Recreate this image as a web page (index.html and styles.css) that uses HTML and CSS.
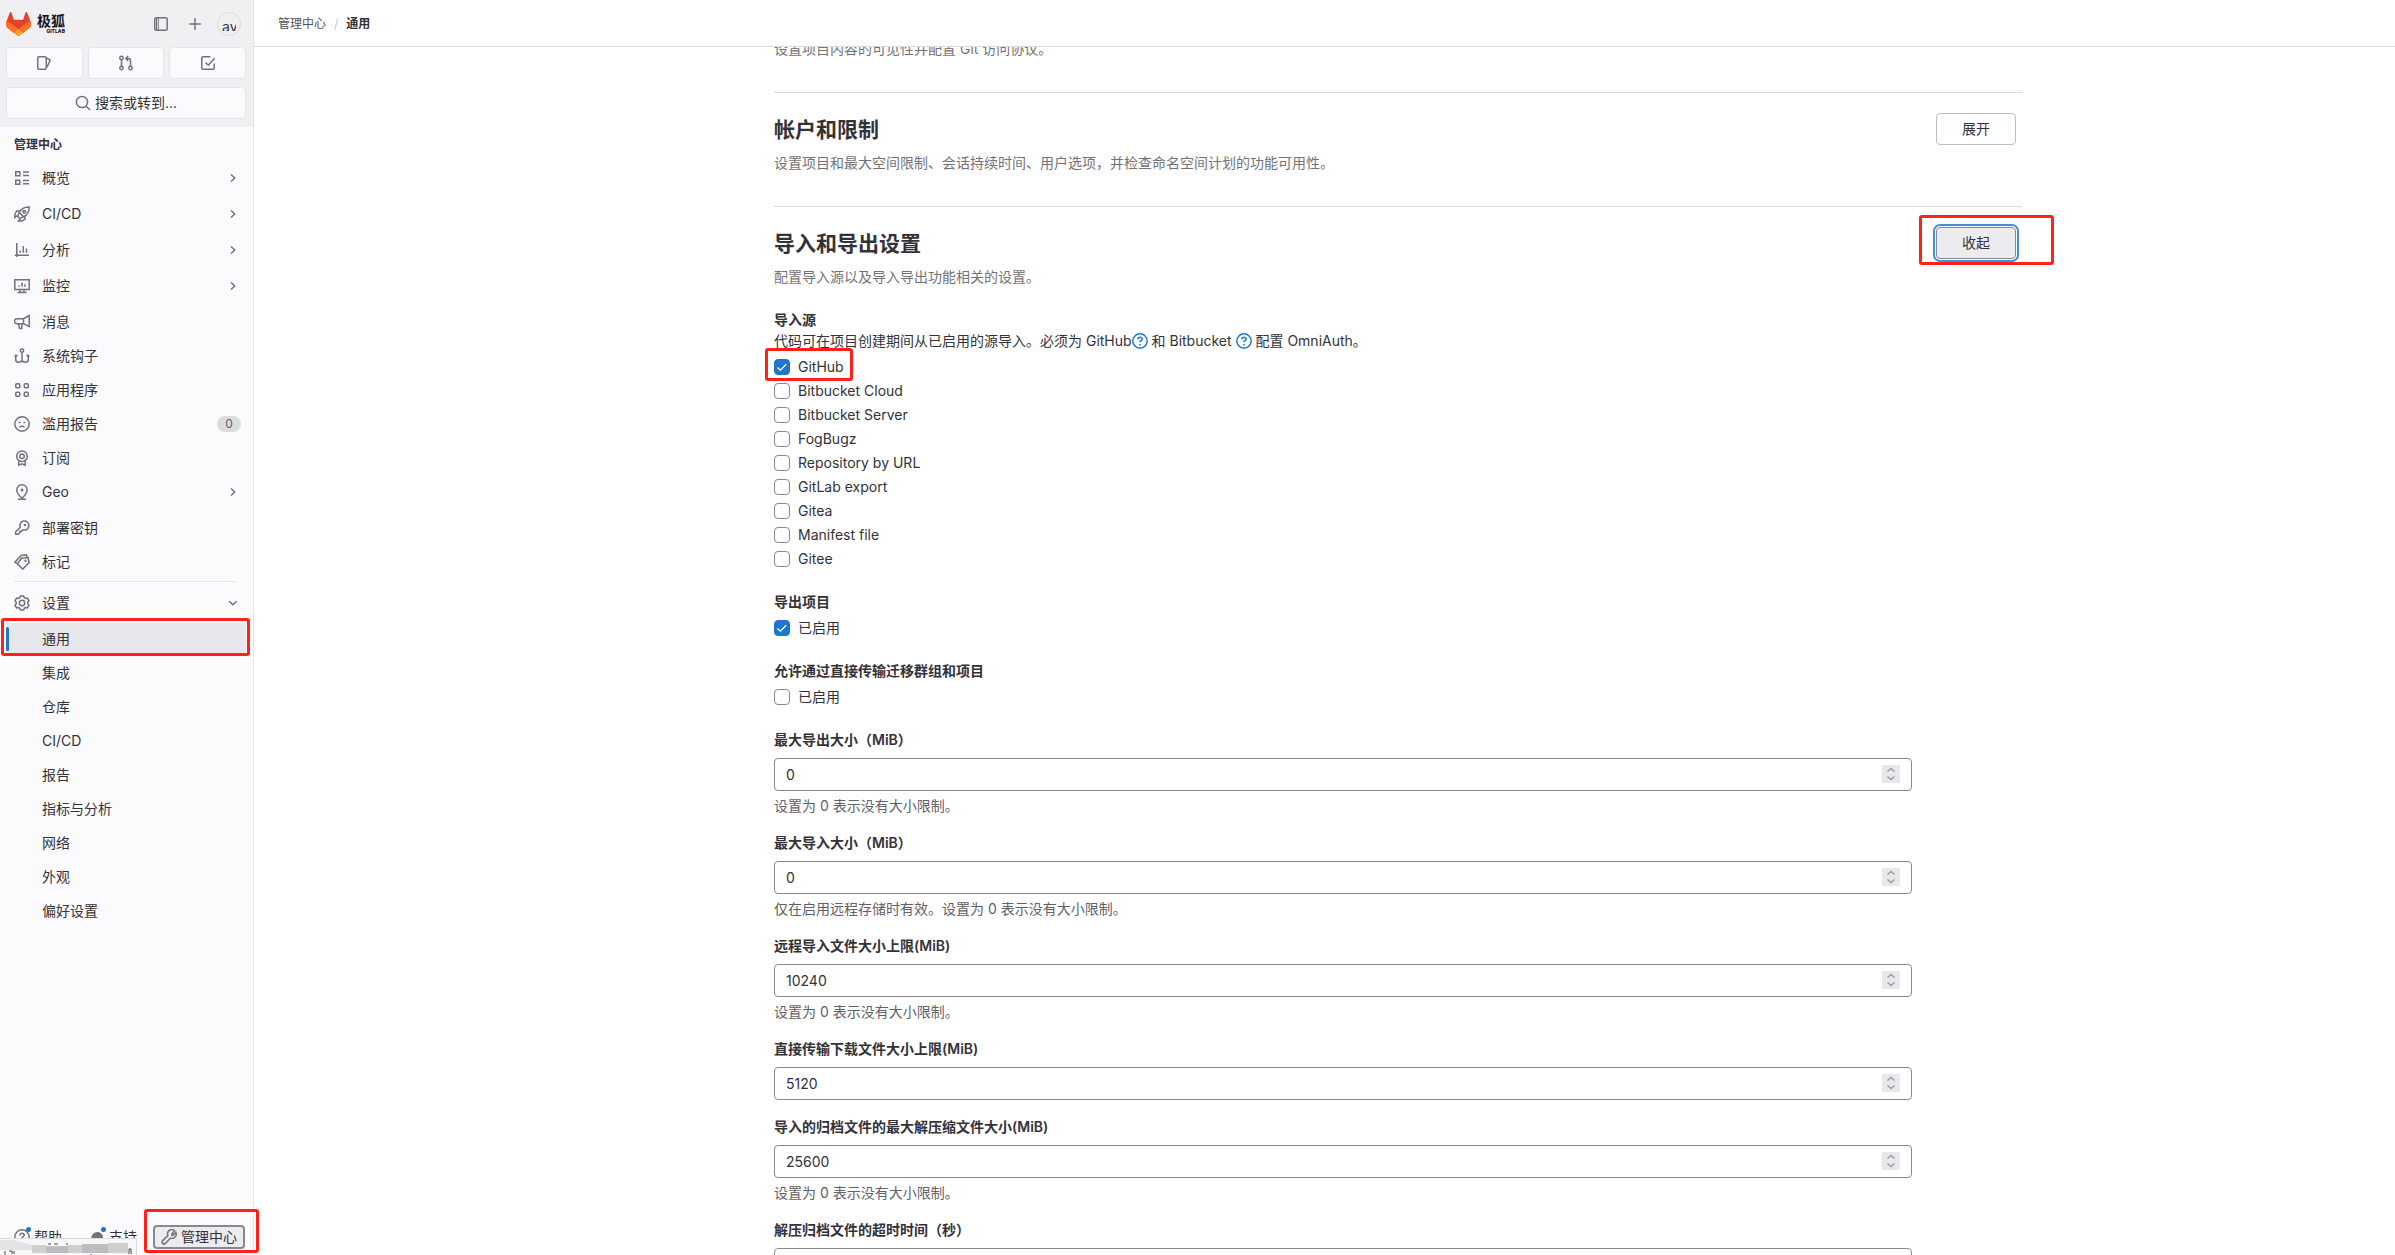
FILE: index.html
```html
<!DOCTYPE html>
<html lang="zh-CN">
<head>
<meta charset="utf-8">
<meta name="viewport" content="width=device-width, initial-scale=1">
<title>通用 · 管理中心</title>
<link rel="stylesheet" href="styles.css">
</head>
<body>
<svg class="sprite" aria-hidden="true">
  <symbol id="i-sidebar" viewBox="0 0 16 16"><rect x="1.75" y="1.75" width="12.5" height="12.5" rx="1.5"/><path d="M5.25 2v12M3.5 2v12" stroke-width="1"/></symbol>
  <symbol id="i-plus" viewBox="0 0 16 16"><path d="M8 2.2v11.6M2.2 8h11.6"/></symbol>
  <symbol id="i-issues" viewBox="0 0 16 16"><rect x="1.75" y="1.75" width="8.5" height="12.5" rx="1.2"/><path d="M11 3.2l3.2 1.9-3.2 7.2"/></symbol>
  <symbol id="i-merge" viewBox="0 0 16 16"><circle cx="3.5" cy="3" r="1.7"/><circle cx="3.5" cy="13" r="1.7"/><circle cx="12.5" cy="13" r="1.7"/><path d="M3.5 4.8v6.4M12.5 11.2V5.5a2 2 0 0 0-2-2H8.2M10.2 1L7.8 3.5l2.4 2.4"/></symbol>
  <symbol id="i-todo" viewBox="0 0 16 16"><path d="M10.5 1.75H3a1.25 1.25 0 0 0-1.25 1.25v10c0 .7.55 1.25 1.25 1.25h10c.7 0 1.25-.55 1.25-1.25V8.5M5.5 7.5L8.3 10.2l6.4-7"/></symbol>
  <symbol id="i-search" viewBox="0 0 16 16"><circle cx="7" cy="7" r="5.6"/><path d="M11.2 11.2l3.8 3.8"/></symbol>
  <symbol id="i-overview" viewBox="0 0 16 16"><rect x="1.75" y="1.75" width="4" height="4"/><rect x="1.75" y="10.25" width="4" height="4"/><path d="M9 2h6M9 5.4h6M9 10.4h6M9 13.8h6"/></symbol>
  <symbol id="i-rocket" viewBox="0 0 16 16"><path d="M15.2.9c-4.4-.2-7.7 1.3-10 5.600L9.600 10.900C13.900 8.600 15.400 5.300 15.200.9zM6 4.900H2.800L.9 8.200v3.400l2.100-2M11 9.900v3.300L7.800 15.100H4.500l2-2.200M5.200 6.500L3.600 10.300l2.100 2.100 3.900-1.500"/><circle cx="10.300" cy="5.800" r="1.300"/></symbol>
  <symbol id="i-chart" viewBox="0 0 16 16"><path d="M2.8 1v12.200H15M.8 13.200h2M2.800 15v-2M6.200 10.800V8.500M9.300 10.800V4M12.500 10.800V6.500"/></symbol>
  <symbol id="i-monitor" viewBox="0 0 16 16"><path d="M.8 1.800h14.400v9.700H.8zM6 11.500v3M10 11.500v3M3.500 14.600h9M5 8.800V7.500M8 8.800V4.500M11 8.800V6.300"/></symbol>
  <symbol id="i-horn" viewBox="0 0 16 16"><path d="M15.200 1.500v11L9.500 9.700H3a2.200 2.200 0 0 1 0-5h6.500zM9.500 4.700v5M4.300 9.800l1.300 4.700h2.200V9.800"/></symbol>
  <symbol id="i-anchor" viewBox="0 0 16 16"><circle cx="8" cy="2.600" r="1.700"/><path d="M8 4.300v10M1.700 7v4.500c0 1.600 1 2.700 2.500 2.700 2.200 0 3.800-.4 3.800-2.400 0 2 1.600 2.400 3.800 2.400 1.500 0 2.500-1.100 2.500-2.700V7M.8 9l1-1.800L3.500 8M15.200 9l-1-1.800-1.700.8"/></symbol>
  <symbol id="i-apps" viewBox="0 0 16 16"><rect x="1.750" y="1.750" width="4" height="4" rx="1"/><rect x="10.250" y="1.750" width="4" height="4" rx="1"/><rect x="1.750" y="10.250" width="4" height="4" rx="1"/><rect x="10.250" y="10.250" width="4" height="4" rx="1"/></symbol>
  <symbol id="i-sad" viewBox="0 0 16 16"><circle cx="8" cy="8" r="7.200"/><path d="M5.500 11.300c1.200-1.300 3.800-1.300 5 0M4.800 6.300l1.700.6M11.200 6.300l-1.700.6"/></symbol>
  <symbol id="i-medal" viewBox="0 0 16 16"><circle cx="8" cy="6.200" r="5.300"/><circle cx="8" cy="6.200" r="2.300"/><path d="M4.800 10.500v4.700L8 13.800l3.200 1.400v-4.700"/></symbol>
  <symbol id="i-pin" viewBox="0 0 16 16"><path d="M8 14.200C5 11.500 2.800 9 2.800 6a5.200 5.200 0 0 1 10.400 0c0 3-2.200 5.500-5.200 8.200zM4 15.200h8"/><circle cx="8" cy="6" r="1.500" class="solid"/></symbol>
  <symbol id="i-key" viewBox="0 0 16 16"><path d="M6.300 7.300A4.500 4.500 0 1 1 9 9.800l-1.500 1.500H5.800v1.500L4 14.300H1.700v-2.500z"/><circle cx="11" cy="5" r=".5"/></symbol>
  <symbol id="i-tag" viewBox="0 0 16 16"><path d="M7.500 4.200l6.500-.7 1.200 5-6.500 6.600-5.300-5.300zM3.600 9.900L.9 8.200 7.300 1.500l5-.6 1.200 2.500"/><circle cx="11.500" cy="6.700" r=".5"/></symbol>
  <symbol id="i-gear" viewBox="0 0 16 16"><path d="M6.400.900h3.200l.7 1.800 1.200.7 1.900-.3 1.600 2.700-1.200 1.500v1.400l1.200 1.500-1.600 2.700-1.900-.3-1.200.7-.7 1.800H6.400l-.7-1.800-1.200-.7-1.900.3L1 10.200l1.200-1.500V7.300L1 5.800l1.600-2.700 1.900.3 1.200-.7z"/><circle cx="8" cy="8" r="2.700"/></symbol>
  <symbol id="i-right" viewBox="0 0 16 16"><path d="M6 4.500L9.700 8 6 11.500"/></symbol>
  <symbol id="i-down" viewBox="0 0 16 16"><path d="M4.200 6.200L8 9.800l3.800-3.600"/></symbol>
  <symbol id="i-help" viewBox="0 0 16 16"><circle cx="8" cy="8" r="7.200"/><path d="M5.800 6.300C6 4.900 6.900 4.300 8 4.300c1.300 0 2.200.8 2.200 1.900C10.200 7.600 8 7.600 8 9.300M8 11v1.500"/></symbol>
  <symbol id="i-wrench" viewBox="0 0 16 16"><path d="M13.600 2.200l-2.800 2.700v1.300h1.300l2.800-2.700a4.300 4.300 0 0 1-5.500 5.600l-5 5.300a1.900 1.900 0 0 1-2.800-2.800l5.300-5A4.300 4.300 0 0 1 12.500.9z"/></symbol>
  <symbol id="i-chat" viewBox="0 0 16 16"><path class="solid" d="M8 3a6 5 0 1 1 0 10H2l1-3a6 5 0 0 1 5-7z"/></symbol>
  <symbol id="i-spin" viewBox="0 0 18 18"><path d="M5.500 6.500L9 3.500l3.500 3M5.500 11.500l3.500 3 3.500-3"/></symbol>
</svg>

<aside class="sidebar">
  <div class="side-head">
    <div class="brand-row">
      <a class="brand" href="#" aria-label="极狐 GitLab">
        <svg class="fox" viewBox="0 0 25 24" aria-hidden="true"><path fill="#e24329" d="M24.507 9.500l-.034-.09L21.082.562a.896.896 0 0 0-1.694.091l-2.290 7.010H7.825L5.535.653A.898.898 0 0 0 3.841.563L.451 9.411.416 9.500a6.297 6.297 0 0 0 2.090 7.278l.012.01.03.022 5.160 3.867 2.560 1.935 1.554 1.176a1.051 1.051 0 0 0 1.268 0l1.555-1.176 2.560-1.935 5.197-3.890.014-.01A6.297 6.297 0 0 0 24.507 9.500z"/><path fill="#fc6d26" d="M24.507 9.500l-.034-.09a11.440 11.440 0 0 0-4.560 2.051l-7.447 5.632 4.742 3.584 5.197-3.890.014-.01A6.297 6.297 0 0 0 24.507 9.500z"/><path fill="#fca326" d="M7.707 20.677l2.560 1.935 1.555 1.176a1.051 1.051 0 0 0 1.268 0l1.555-1.176 2.560-1.935-4.743-3.584-4.755 3.584z"/><path fill="#fc6d26" d="M5.010 11.461a11.430 11.430 0 0 0-4.560-2.050L.416 9.500a6.297 6.297 0 0 0 2.090 7.278l.012.01.03.022 5.160 3.867 4.745-3.584-7.444-5.632z"/></svg>
        <span class="brand-name"><b>极狐</b><small>GITLAB</small></span>
      </a>
      <button class="plain" aria-label="切换侧边栏"><svg class="icon"><use href="#i-sidebar"/></svg></button>
      <button class="plain" aria-label="新建"><svg class="icon"><use href="#i-plus"/></svg></button>
      <button class="plain avatar" aria-label="用户菜单"><span>avatar</span></button>
    </div>
    <div class="shortcuts">
      <a class="tile" href="#" aria-label="议题"><svg class="icon"><use href="#i-issues"/></svg></a>
      <a class="tile" href="#" aria-label="合并请求"><svg class="icon"><use href="#i-merge"/></svg></a>
      <a class="tile" href="#" aria-label="待办事项"><svg class="icon"><use href="#i-todo"/></svg></a>
    </div>
    <button class="tile search"><svg class="icon"><use href="#i-search"/></svg>搜索或转到...</button>
  </div>

  <nav class="nav" aria-label="管理中心">
    <h2 class="nav-title">管理中心</h2>
    <button class="item group"><svg class="icon"><use href="#i-overview"/></svg><span>概览</span><svg class="icon chev"><use href="#i-right"/></svg></button>
    <button class="item group"><svg class="icon"><use href="#i-rocket"/></svg><span>CI/CD</span><svg class="icon chev"><use href="#i-right"/></svg></button>
    <button class="item group"><svg class="icon"><use href="#i-chart"/></svg><span>分析</span><svg class="icon chev"><use href="#i-right"/></svg></button>
    <button class="item group"><svg class="icon"><use href="#i-monitor"/></svg><span>监控</span><svg class="icon chev"><use href="#i-right"/></svg></button>
    <a class="item" href="#"><svg class="icon"><use href="#i-horn"/></svg><span>消息</span></a>
    <a class="item" href="#"><svg class="icon"><use href="#i-anchor"/></svg><span>系统钩子</span></a>
    <a class="item" href="#"><svg class="icon"><use href="#i-apps"/></svg><span>应用程序</span></a>
    <a class="item" href="#"><svg class="icon"><use href="#i-sad"/></svg><span>滥用报告</span><span class="badge">0</span></a>
    <a class="item" href="#"><svg class="icon"><use href="#i-medal"/></svg><span>订阅</span></a>
    <button class="item group"><svg class="icon"><use href="#i-pin"/></svg><span>Geo</span><svg class="icon chev"><use href="#i-right"/></svg></button>
    <a class="item" href="#"><svg class="icon"><use href="#i-key"/></svg><span>部署密钥</span></a>
    <a class="item" href="#"><svg class="icon"><use href="#i-tag"/></svg><span>标记</span></a>
    <hr class="nav-rule">
    <button class="item group" aria-expanded="true"><svg class="icon"><use href="#i-gear"/></svg><span>设置</span><svg class="icon chev"><use href="#i-down"/></svg></button>
    <a class="item sub active" href="#" aria-current="page">通用</a>
    <a class="item sub" href="#">集成</a>
    <a class="item sub" href="#">仓库</a>
    <a class="item sub" href="#">CI/CD</a>
    <a class="item sub" href="#">报告</a>
    <a class="item sub" href="#">指标与分析</a>
    <a class="item sub" href="#">网络</a>
    <a class="item sub" href="#">外观</a>
    <a class="item sub" href="#">偏好设置</a>
  </nav>

  <footer class="side-foot">
    <button class="foot-btn dot"><svg class="icon"><use href="#i-help"/></svg>帮助</button>
    <button class="foot-btn dot"><svg class="icon"><use href="#i-chat"/></svg>支持</button>
    <a class="admin" href="#"><svg class="icon"><use href="#i-wrench"/></svg>管理中心</a>
  </footer>
</aside>

<div class="page">
  <header class="topbar">
    <nav class="crumbs" aria-label="面包屑"><a href="#">管理中心</a><span class="slash">/</span><a class="here" href="#">通用</a></nav>
  </header>
  <main class="content">
    <div class="column">
      <section class="block first"><p class="desc">设置项目内容的可见性并配置 Git 访问协议。</p></section>

      <section class="block">
        <div class="block-head"><h2>帐户和限制</h2><button class="btn">展开</button></div>
        <p class="desc">设置项目和最大空间限制、会话持续时间、用户选项，并检查命名空间计划的功能可用性。</p>
      </section>

      <section class="block">
        <div class="block-head"><h2>导入和导出设置</h2><div class="mark mark-btn"><button class="btn focused">收起</button></div></div>
        <p class="desc">配置导入源以及导入导出功能相关的设置。</p>
        <form class="form">
          <fieldset class="sources">
            <legend>导入源</legend>
            <p class="note">代码可在项目创建期间从已启用的源导入。必须为 GitHub<a href="#" aria-label="GitHub 帮助"><svg class="icon"><use href="#i-help"/></svg></a> 和 Bitbucket <a href="#" aria-label="Bitbucket 帮助"><svg class="icon"><use href="#i-help"/></svg></a> 配置 OmniAuth。</p>
            <label class="check mark mark-check"><input type="checkbox" checked>GitHub</label>
            <label class="check"><input type="checkbox">Bitbucket Cloud</label>
            <label class="check"><input type="checkbox">Bitbucket Server</label>
            <label class="check"><input type="checkbox">FogBugz</label>
            <label class="check"><input type="checkbox">Repository by URL</label>
            <label class="check"><input type="checkbox">GitLab export</label>
            <label class="check"><input type="checkbox">Gitea</label>
            <label class="check"><input type="checkbox">Manifest file</label>
            <label class="check"><input type="checkbox">Gitee</label>
          </fieldset>
          <fieldset class="toggle">
            <legend>导出项目</legend>
            <label class="check"><input type="checkbox" checked>已启用</label>
          </fieldset>
          <fieldset class="toggle">
            <legend>允许通过直接传输迁移群组和项目</legend>
            <label class="check"><input type="checkbox">已启用</label>
          </fieldset>
          <div class="field">
            <label for="max-export">最大导出大小（MiB）</label>
            <div class="number"><input id="max-export" type="number" value="0"><svg class="spin" aria-hidden="true"><use href="#i-spin"/></svg></div>
            <p class="help">设置为 0 表示没有大小限制。</p>
          </div>
          <div class="field">
            <label for="max-import">最大导入大小（MiB）</label>
            <div class="number"><input id="max-import" type="number" value="0"><svg class="spin" aria-hidden="true"><use href="#i-spin"/></svg></div>
            <p class="help">仅在启用远程存储时有效。设置为 0 表示没有大小限制。</p>
          </div>
          <div class="field">
            <label for="remote-max">远程导入文件大小上限(MiB)</label>
            <div class="number"><input id="remote-max" type="number" value="10240"><svg class="spin" aria-hidden="true"><use href="#i-spin"/></svg></div>
            <p class="help">设置为 0 表示没有大小限制。</p>
          </div>
          <div class="field">
            <label for="direct-max">直接传输下载文件大小上限(MiB)</label>
            <div class="number"><input id="direct-max" type="number" value="5120"><svg class="spin" aria-hidden="true"><use href="#i-spin"/></svg></div>
          </div>
          <div class="field">
            <label for="unpack-max">导入的归档文件的最大解压缩文件大小(MiB)</label>
            <div class="number"><input id="unpack-max" type="number" value="25600"><svg class="spin" aria-hidden="true"><use href="#i-spin"/></svg></div>
            <p class="help">设置为 0 表示没有大小限制。</p>
          </div>
          <div class="field">
            <label for="unpack-time">解压归档文件的超时时间（秒）</label>
            <div class="number"><input id="unpack-time" type="number" value="210"><svg class="spin" aria-hidden="true"><use href="#i-spin"/></svg></div>
          </div>
        </form>
      </section>
    </div>
  </main>
</div>

<div class="status" aria-hidden="true">
  <svg viewBox="0 0 136 17"><path fill="#e3e3e5" d="M0 1h14l18 5h14v5H0z"/><path fill="#cfcfd2" d="M32 6h14v8H32zM68 6h14v8H68zM108 4h20v10h-20z"/><path fill="#bebec2" d="M46 7h22v7H46zM82 5h26v9H82z"/><path stroke="#4c4b51" stroke-width="1" fill="none" d="M5 12v4M9 12h3v3M14 12v3M48 5h3M54 5h4M67 4v2M91 15v2M129 15v-5h2v5"/></svg>
</div>
</body>
</html>
```
FILE: styles.css
```css
* { box-sizing: border-box; }

body {
  margin: 0;
  height: 100vh;
  display: flex;
  overflow: hidden;
  background: #fff;
  color: #333238;
  font: 14px/20px Inter, "Noto Sans CJK SC", sans-serif;
}

h2, p, fieldset, legend { margin: 0; padding: 0; border: 0; }
a { color: inherit; text-decoration: none; }
button, input { font: inherit; color: inherit; margin: 0; }
.sprite { display: none; }

.icon {
  width: 16px;
  height: 16px;
  flex: none;
  fill: none;
  stroke: #737278;
  stroke-width: 1.5;
}
.solid { fill: #737278; stroke: none; }

/* Sidebar */
.sidebar {
  width: 254px;
  flex: none;
  display: flex;
  flex-direction: column;
  background: #fbfafd;
  border-right: 1px solid #e3e3e8;
}
.side-head {
  padding: 0 7px 8px 6px;
  background: #f0f0f3;
}
.brand-row {
  height: 47px;
  display: flex;
  align-items: center;
  gap: 10px;
  padding-right: 5px;
}
.brand { display: flex; align-items: center; gap: 6px; margin-right: auto; }
.fox { width: 25px; height: 24px; }
.brand-name { display: flex; flex-direction: column; color: #171321; }
.brand-name b { font-size: 14px; line-height: 16px; }
.brand-name small { font-size: 5px; line-height: 5px; font-weight: 800; text-align: right; }
.plain {
  width: 24px;
  height: 24px;
  padding: 0;
  display: flex;
  align-items: center;
  justify-content: center;
  border: 0;
  background: none;
}
.avatar { border: 1px solid #dcdcde; border-radius: 50%; }
.avatar span { width: 14px; height: 12px; margin-top: 2px; overflow: hidden; line-height: 16px; text-align: left; }
.shortcuts { display: grid; grid-template-columns: repeat(3, 1fr); gap: 5px; margin-bottom: 8px; }
.tile {
  height: 32px;
  display: flex;
  align-items: center;
  justify-content: center;
  gap: 4px;
  background: #fbfafd;
  border: 1px solid #e6e6ea;
  border-radius: 4px;
}
.search { width: 100%; padding: 0; }

.nav { flex: 1; padding: 8px 7px 0 6px; }
.nav-title { padding: 0 8px; margin-bottom: 7px; font-size: 12px; line-height: 20px; font-weight: 600; }
.item {
  width: 100%;
  height: 32px;
  display: flex;
  align-items: center;
  gap: 12px;
  margin-bottom: 2px;
  padding: 0 5px 0 8px;
  border: 0;
  background: none;
  text-align: left;
}
.group { margin-bottom: 4px; }
.chev { margin-left: auto; }
.badge {
  width: 24px;
  height: 16px;
  margin-left: auto;
  border-radius: 8px;
  background: #dcdcde;
  color: #626168;
  font-size: 12px;
  line-height: 16px;
  text-align: center;
}
.nav-rule { margin: 3px 9px 5px 8px; border: 0; border-top: 1px solid #e6e6ea; }
.sub { padding-left: 36px; }
.active { position: relative; background: #e8e7ec; }
.active::before {
  content: "";
  position: absolute;
  left: 0;
  top: 4px;
  bottom: 4px;
  width: 3px;
  border-radius: 2px;
  background: #1f75cb;
}
.active::after, .admin::after, .mark::after {
  content: "";
  position: absolute;
  border: 3px solid #ff2218;
  border-radius: 3px;
  pointer-events: none;
}
.active::after { inset: -5px -4px -1px -5px; }

.side-foot { display: flex; align-items: center; padding: 0 8px 6px 14px; }
.foot-btn {
  position: relative;
  display: flex;
  align-items: center;
  gap: 4px;
  width: 75px;
  padding: 0;
  border: 0;
  background: none;
}
.foot-btn + .foot-btn { width: 64px; }
.dot::before {
  content: "";
  position: absolute;
  left: 12px;
  top: 0;
  width: 5px;
  height: 5px;
  border-radius: 50%;
  background: #1f75cb;
}
.admin {
  position: relative;
  flex: 1;
  height: 24px;
  display: flex;
  align-items: center;
  justify-content: center;
  gap: 4px;
  border: 2px solid #89888d;
  border-radius: 4px;
  background: #ececef;
}
.admin::after { inset: -18px -16px -6px -11px; z-index: 2; }

/* Page */
.page { flex: 1; min-width: 0; display: flex; flex-direction: column; }
.topbar {
  height: 47px;
  flex: none;
  display: flex;
  align-items: center;
  padding: 1px 24px 0;
  background: #fff;
  border-bottom: 1px solid #dcdcde;
}
.crumbs { display: flex; gap: 8px; font-size: 12px; color: #535158; }
.slash { color: #bfbfc3; }
.here { font-weight: 600; color: #333238; }
.content {
  flex: 1;
  min-height: 0;
  overflow: hidden;
  display: grid;
  grid-template-columns: 520fr minmax(0, 1248px) 373fr;
}
.column { grid-column: 2; }
.block { padding: 20px 0 33px; border-top: 1px solid #dcdcde; }
.first { margin-top: -8px; padding: 0 0 33px; border: 0; }
.block-head { display: flex; justify-content: space-between; align-items: center; padding-right: 6px; margin-bottom: 8px; }
.block-head h2 { padding-top: 2px; font-size: 21px; line-height: 28px; font-weight: 600; }
.desc { color: #737278; }
.btn {
  width: 80px;
  height: 32px;
  display: block;
  padding: 0;
  border: 1px solid #bfbfc3;
  border-radius: 4px;
  background: #fff;
}
.focused {
  border-color: #89888d;
  background: #ececef;
  box-shadow: 0 0 0 1px #fff, 0 0 0 3px #428fdc;
}
.mark { position: relative; }
.mark-btn::after { inset: -12px -38px -6px -17px; }
.check.mark-check { width: max-content; }
.mark-check::after { inset: -7px -9px -2px -9px; }

.form { padding-right: 110px; margin-top: 23px; }
legend, .field > label { display: block; font-weight: 600; line-height: 20px; }
.note { margin: 1px 0 4px; }
.note .icon { stroke: #1f75cb; vertical-align: -3px; }
.check { display: flex; align-items: center; gap: 8px; height: 24px; }
.check input {
  appearance: none;
  width: 16px;
  height: 16px;
  border: 1px solid #89888d;
  border-radius: 4px;
  background: #fff;
}
.check input:checked {
  border-color: #1f75cb;
  background: #1f75cb url("data:image/svg+xml,%3Csvg xmlns='http://www.w3.org/2000/svg' viewBox='0 0 14 14'%3E%3Cpath d='M2.500 7.500l2.800 2.700 6-6' fill='none' stroke='white' stroke-width='1.300'/%3E%3C/svg%3E");
}
.sources, .toggle { margin-bottom: 21px; }
.toggle legend { margin-bottom: 4px; }
.field { margin-bottom: 17px; }
.field > label { margin-bottom: 8px; }
.number { position: relative; }
.number input {
  width: 100%;
  height: 33px;
  display: block;
  padding: 0 36px 0 11px;
  border: 1px solid #89888d;
  border-radius: 4px;
  background: #fff;
  appearance: textfield;
}
.number input::-webkit-inner-spin-button { display: none; }
.spin {
  position: absolute;
  right: 12px;
  top: 7px;
  width: 18px;
  height: 18px;
  background: #e8e7ec;
  fill: none;
  stroke: #9c9aa5;
  stroke-width: 1.5;
}
.help { margin-top: 5px; color: #626168; }

/* Browser link preview over the lower left corner */
.status {
  position: fixed;
  left: 0;
  bottom: 0;
  width: 137px;
  height: 17px;
  overflow: hidden;
  background: #f7f7f8;
  border: 1px solid #dcdcde;
  border-width: 1px 1px 0 0;
}
.status svg { display: block; width: 136px; height: 17px; }
```
